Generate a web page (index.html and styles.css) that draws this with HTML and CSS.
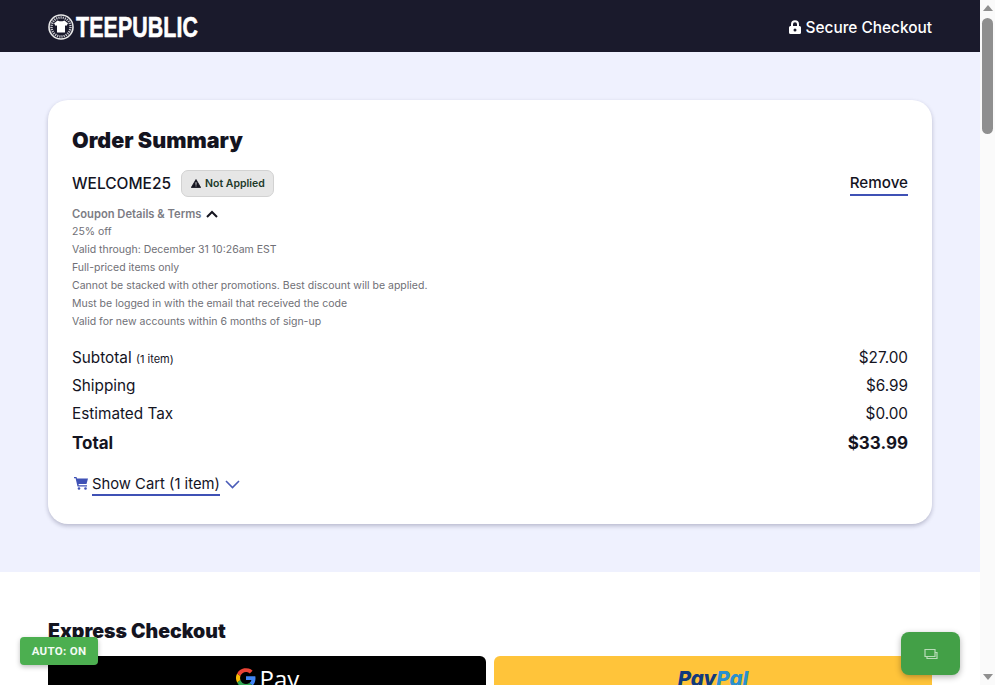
FILE: index.html
```html
<!DOCTYPE html>
<html>

<head>
    <title>Checkout</title>
    <link rel="stylesheet" href="styles.css">
</head>

<body>
    <div class="window">
        <div class="page">
            <header class="topbar">
                <div class="logo">
                    <svg class="logo-mark" width="26" height="26" viewBox="0 0 26 26">
                        <circle cx="13" cy="13" r="12" fill="none" stroke="#e8e8e8" stroke-width="1.600" />
                        <circle cx="13" cy="13" r="9.500" fill="none" stroke="#c9c9cf" stroke-width="2.400" stroke-dasharray="1.200 1" />
                        <path d="M9.500 6.500l2 .7h3l2-.7 3.500 3-1.800 2.400-1.200-.7v7.300h-8v-7.300l-1.200.7L6 9.500z" fill="#fff" />
                    </svg>
                    <span class="logo-text">TEEPUBLIC</span>
                </div>
                <div class="secure">
                    <svg width="12" height="14" viewBox="0 0 12 14">
                        <path d="M2 6V4.200a4 4 0 0 1 8 0V6h.5A1.500 1.500 0 0 1 12 7.500v5a1.500 1.500 0 0 1-1.500 1.500h-9A1.500 1.500 0 0 1 0 12.500v-5A1.500 1.500 0 0 1 1.500 6zm2 0h4V4.200a2 2 0 0 0-4 0z" fill="#fff" />
                        <circle cx="6" cy="10" r="1.500" fill="#1a1a2c" />
                    </svg>
                    <span>Secure Checkout</span>
                </div>
            </header>

            <section class="summary-band">
                <div class="card">
                    <h2 class="card-title">Order Summary</h2>

                    <div class="coupon-row">
                        <div class="coupon-left">
                            <span class="coupon-code">WELCOME25</span>
                            <span class="coupon-badge">
                                <svg width="10" height="9" viewBox="0 0 10 9">
                                    <path d="M5 .5L9.700 8.500H.3z" fill="#14141f" stroke="#14141f" stroke-width=".8" stroke-linejoin="round" />
                                    <path d="M5 3.200v2.600M5 6.500v.9" stroke="#e6e6e6" stroke-width=".9" />
                                </svg>
                                Not Applied
                            </span>
                        </div>
                        <a class="link remove-link">Remove</a>
                    </div>

                    <div class="terms-head">
                        Coupon Details &amp; Terms
                        <svg width="12" height="8" viewBox="0 0 12 8">
                            <path d="M1 7l5-5 5 5" fill="none" stroke="#14141f" stroke-width="2" />
                        </svg>
                    </div>
                    <ul class="terms">
                        <li>25% off</li>
                        <li>Valid through: December 31 10:26am EST</li>
                        <li>Full-priced items only</li>
                        <li>Cannot be stacked with other promotions. Best discount will be applied.</li>
                        <li>Must be logged in with the email that received the code</li>
                        <li>Valid for new accounts within 6 months of sign-up</li>
                    </ul>

                    <div class="line"><span>Subtotal <small>(1 item)</small></span><span>$27.00</span></div>
                    <div class="line"><span>Shipping</span><span>$6.99</span></div>
                    <div class="line"><span>Estimated Tax</span><span>$0.00</span></div>
                    <div class="line line-total"><span>Total</span><span>$33.99</span></div>

                    <div class="cart-toggle">
                        <svg class="cart-icon" width="14" height="13" viewBox="0 0 14 13">
                            <path d="M0 0h2.500l.5 1.500h11l-1.500 5.500H4.500l.3 1.200h8.200v1.300H3.500L1.600 1.300H0z" fill="#3f51b5" />
                            <circle cx="5" cy="11.500" r="1.300" fill="#3f51b5" />
                            <circle cx="11.500" cy="11.500" r="1.300" fill="#3f51b5" />
                        </svg>
                        <a class="link cart-link">Show Cart (1 item)</a>
                        <svg class="cart-chevron" width="15" height="9" viewBox="0 0 15 9">
                            <path d="M1 1l6.500 6.500L14 1" fill="none" stroke="#4a5cb8" stroke-width="1.600" />
                        </svg>
                    </div>
                </div>
            </section>

            <section class="express">
                <h2 class="express-title">Express Checkout</h2>
                <div class="pay-buttons">
                    <div class="pay-btn pay-google">
                        <svg width="22" height="22" viewBox="0 0 22 22">
                            <path d="M20.500 11.200c0-.7-.1-1.400-.2-2H11v3.800h5.400a4.600 4.600 0 0 1-2 3l3.200 2.500c1.900-1.700 2.900-4.300 2.900-7.300z" fill="#4285f4" />
                            <path d="M11 21c2.700 0 4.900-.9 6.600-2.500l-3.200-2.500c-.9.600-2 1-3.400 1-2.600 0-4.800-1.800-5.600-4.100L2.100 15.500A10 10 0 0 0 11 21z" fill="#34a853" />
                            <path d="M5.400 12.900a6 6 0 0 1 0-3.800L2.100 6.500a10 10 0 0 0 0 9z" fill="#fbbc04" />
                            <path d="M11 5c1.500 0 2.800.5 3.800 1.500l2.800-2.800A10 10 0 0 0 2.100 6.500l3.300 2.600C6.200 6.800 8.400 5 11 5z" fill="#ea4335" />
                        </svg>
                        <span class="gpay-text">Pay</span>
                    </div>
                    <div class="pay-btn pay-paypal">
                        <span class="pp-dark">Pay</span><span class="pp-light">Pal</span>
                    </div>
                </div>
            </section>
        </div>

        <div class="scrollbar">
            <span class="arrow-up"></span>
            <div class="scroll-track"><div class="scroll-thumb"></div></div>
            <span class="arrow-down"></span>
        </div>

        <div class="auto-badge">AUTO: ON</div>
        <div class="float-btn">
            <svg width="14" height="12" viewBox="0 0 14 12">
                <path d="M1 1.500h10v7H1zM3 8.500v2h10v-6h-2" fill="none" stroke="#b9dcb9" stroke-width="1.200" />
            </svg>
        </div>
    </div>
</body>

</html>
```

FILE: styles.css
```css
* {
    box-sizing: border-box;
}

html,
body {
    margin: 0;
    padding: 0;
    height: 100%;
    overflow: hidden;
}

body {
    font-family: Inter, "Liberation Sans", sans-serif;
    color: #14141f;
    background-color: #fff;
}

.window {
    position: relative;
    display: flex;
    width: 995px;
    height: 685px;
    overflow: hidden;
}

.page {
    width: 980px;
    height: 685px;
    overflow: hidden;
    flex: none;
}

/* Top bar */
.topbar {
    display: flex;
    align-items: center;
    justify-content: space-between;
    height: 52px;
    padding: 2px 48px 0;
    background-color: #1a1a2c;
    color: #fff;
}

.logo {
    display: flex;
    align-items: center;
    gap: 2px;
}

/* no condensed face installed, so squeeze the bold one */
.logo-text {
    font-family: "Liberation Sans", sans-serif;
    font-weight: 700;
    font-size: 29px;
    letter-spacing: 0.2px;
    -webkit-text-stroke: 0.6px #fff;
    transform: scaleX(0.735);
    transform-origin: left center;
}

.secure {
    display: flex;
    align-items: center;
    gap: 5px;
    font-size: 15.400px;
    font-weight: 500;
}

/* Order summary */
.summary-band {
    height: 520px;
    padding: 48px 48px 0;
    background-color: #eff1fe;
}

.card {
    height: 424px;
    padding: 24px;
    background-color: #fff;
    border-radius: 20px;
    box-shadow: 0 2px 4px rgba(20, 20, 60, 0.25);
}

.card-title {
    margin: 3px 0 16px;
    font-size: 21.500px;
    line-height: 26px;
    font-weight: 900;
}

.coupon-row {
    display: flex;
    align-items: center;
    justify-content: space-between;
    height: 28px;
}

.coupon-left {
    display: flex;
    align-items: center;
    gap: 10px;
}

.coupon-code {
    font-size: 15.500px;
    font-weight: 500;
}

.coupon-badge {
    display: flex;
    align-items: center;
    gap: 4px;
    height: 27px;
    padding: 0 8px 0 9px;
    font-size: 10.500px;
    font-weight: 600;
    color: #1d3a2a;
    background-color: #e6e6e6;
    border: 1px solid #d2d2d2;
    border-radius: 7px;
}

.link {
    display: inline-block;
    color: #14141f;
    border-bottom: 2px solid #3f51b5;
}

.remove-link {
    margin-top: 3px;
    padding-bottom: 2px;
    font-size: 15.200px;
    font-weight: 500;
}

.terms-head {
    display: flex;
    align-items: center;
    gap: 5px;
    margin-top: 8px;
    height: 18px;
    font-size: 11.200px;
    font-weight: 600;
    color: #7c7c84;
}

.terms {
    margin: 0 0 12px;
    padding: 0;
    list-style: none;
    font-size: 10.500px;
    line-height: 18px;
    color: #6f6f76;
}

.line {
    display: flex;
    align-items: center;
    justify-content: space-between;
    height: 28px;
    font-size: 15.300px;
}

.line small {
    font-size: 11px;
}

.line-total {
    height: 32px;
    font-size: 17px;
    font-weight: 700;
}

.cart-toggle {
    display: flex;
    align-items: center;
    gap: 5px;
    margin-top: 16px;
    font-size: 14.800px;
}

.cart-icon {
    margin: -4px 0 0 2px;
}

.cart-link {
    margin-left: -1px;
    padding-bottom: 1px;
}

.cart-chevron {
    margin-top: -3px;
}

/* Express checkout */
.express {
    padding: 48px 48px 0;
}

.express-title {
    margin: 0 0 14px;
    font-size: 19.500px;
    line-height: 22px;
    font-weight: 900;
}

.pay-buttons {
    display: flex;
    gap: 8px;
}

.pay-btn {
    display: flex;
    align-items: center;
    justify-content: center;
    width: 438px;
    height: 44px;
    border-radius: 6px;
}

.pay-google {
    gap: 3px;
    background-color: #000;
    color: #fff;
}

.gpay-text {
    font-family: "Open Sans", sans-serif;
    font-size: 24px;
}

.pay-paypal {
    background-color: #ffc43a;
    font-size: 20.500px;
    font-weight: 800;
    font-style: italic;
}

.pp-dark {
    color: #123a7c;
}

.pp-light {
    color: #2a90cf;
}

/* Scrollbar */
.scrollbar {
    display: flex;
    flex-direction: column;
    align-items: center;
    width: 15px;
    background-color: #fafafa;
}

.arrow-up,
.arrow-down {
    width: 0;
    height: 0;
    margin: 5px 0;
    border-left: 5px solid transparent;
    border-right: 5px solid transparent;
}

.arrow-up {
    border-bottom: 6px solid #8f8f8f;
}

.arrow-down {
    border-top: 6px solid #8f8f8f;
}

.scroll-track {
    flex: 1;
    width: 100%;
    padding: 2px 2px 0;
}

.scroll-thumb {
    height: 116px;
    background-color: #8f8f8f;
    border-radius: 6px;
}

/* Floating widgets */
.auto-badge {
    position: absolute;
    left: 20px;
    top: 637px;
    display: flex;
    align-items: center;
    justify-content: center;
    width: 78px;
    height: 28px;
    font-family: Roboto, sans-serif;
    font-size: 11.500px;
    font-weight: 700;
    letter-spacing: 0.3px;
    color: #f3fbf3;
    background-color: #4caf50;
    border-radius: 4px;
    box-shadow: 0 2px 5px rgba(0, 0, 0, 0.25);
}

.float-btn {
    position: absolute;
    left: 901px;
    top: 632px;
    display: flex;
    align-items: center;
    justify-content: center;
    width: 59px;
    height: 43px;
    background-color: #43a047;
    border-radius: 8px;
    box-shadow: 0 2px 6px rgba(0, 0, 0, 0.3);
}
```
